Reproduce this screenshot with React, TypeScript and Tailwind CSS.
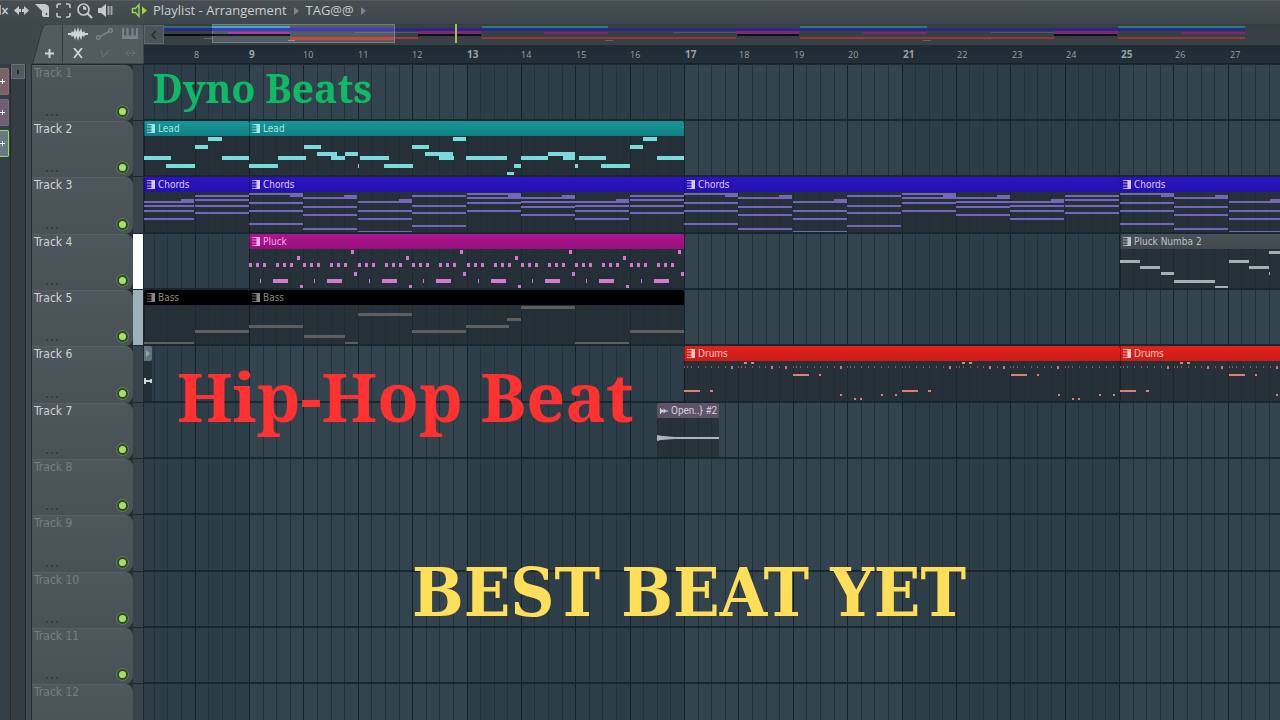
import { ReactNode } from "react";
import clsx from "clsx";

// [x, width, y] in pixels, relative to the clip body
type Note = [number, number, number];

// One four bar section is 218px wide, the 8 bar patterns are 435px
const PATTERN = 435;
const barX = (bar: number) => Math.round((bar * PATTERN) / 8);

const leadNotes: Note[] = [
  [0, 29, 28], [29, 28, 20], [55, 17, 9], [68, 20, 16], [82, 14, 20], [96, 13, 16],
  [109, 1, 28], [111, 29, 20], [135, 29, 28], [163, 17, 9], [176, 28, 16], [190, 15, 20],
  [204, 13, 1], [217, 41, 20], [258, 7, 36], [265, 7, 28], [272, 27, 20], [299, 27, 16],
  [314, 12, 20], [326, 3, 28], [330, 27, 20], [352, 29, 28], [381, 13, 9], [394, 14, 1], [408, 27, 20],
];

const chordRows = [
  [1, 10, 18, 31],
  [5, 14, 22, 36],
  [9, 18, 26, 39],
  [3, 13, 20, 33],
  [1, 5, 10, 18],
  [5, 9, 14, 22],
  [9, 13, 18, 26],
  [3, 7, 13, 20],
];
const chordPickups = [3, 3, 7, null, 3, 3, 7, null];
const chordNotes: Note[] = chordRows.flatMap((rows, bar) => {
  const notes: Note[] = rows.map((y) => [barX(bar), 54, y]);
  const pickup = chordPickups[bar];
  if (pickup !== null) notes.push([barX(bar) + 41, 13, pickup]);
  return notes;
});

const pluckNotes: Note[] = Array.from({ length: 8 }, (_, i) => i).flatMap((bar) => {
  const x = barX(bar);
  const notes: Note[] = [0, 7, 14, 27, 34, 41].map((dx) => [x + dx, 3, 14]);
  notes.push([x + 11, 1, 30], [x + 24, 15, 30]);
  if (bar % 2) notes.push([x + 48, 3, 1], [x + 51, 3, 23]);
  else notes.push([x + 48, 3, 7], [x + 51, 3, 36]);
  return notes;
});

const bassNotes: Note[] = [
  [0, 54, 20], [55, 41, 30], [96, 13, 37], [109, 54, 8], [163, 54, 25],
  [217, 43, 20], [258, 14, 13], [272, 54, 1], [326, 54, 37], [381, 54, 25],
];

const drumNotes: Note[] = [0, 218].flatMap((x): Note[] => [
  [x, 16, 29], [x + 26, 3, 29], [x + 109, 16, 13], [x + 135, 2, 13],
  [x + 60, 3, 1], [x + 67, 3, 1],
  [x + 156, 2, 33], [x + 197, 2, 33], [x + 211, 2, 33], [x + 170, 2, 37], [x + 176, 2, 37],
]);

const hats: Note[] = Array.from({ length: 8 }, (_, i) => i).flatMap((bar) => {
  const x = barX(bar);
  const notes: Note[] = [0, 3, 7, 14, 21, 27, 34, 41].map((dx) => [x + dx, 1, 5]);
  notes.push(bar % 4 === 3 ? [x + 48, 1, 5] : [x + 47, 2, 5]);
  if (bar % 4 === 1) notes.push([x + 33, 2, 5]);
  return notes;
});

const numbaNotes: Note[] = [
  [0, 20, 11], [20, 20, 17], [41, 13, 23], [54, 41, 31], [95, 13, 37],
  [109, 20, 11], [129, 20, 17], [149, 13, 2], [149, 1, 23],
];

interface ClipData {
  name: string;
  x: number;
  width: number;
  offset?: number;
  header: string;
  label: string;
  fill: string;
  notes: Note[];
  thickness: number;
  fine?: Note[];
}

const lead = {
  name: "Lead",
  header: "bg-linear-to-b from-[#18959a] to-[#0f8184]",
  label: "text-[#a3e6e4]",
  fill: "fill-[#79dcdb]",
  notes: leadNotes,
  thickness: 4,
};
const chords = {
  name: "Chords",
  header: "bg-linear-to-b from-[#2c14c4] to-[#2410ae]",
  label: "text-[#d6ccfa]",
  fill: "fill-[#7465bd]",
  notes: chordNotes,
  thickness: 2,
};
const pluck = {
  name: "Pluck",
  header: "bg-linear-to-b from-[#ad1590] to-[#97107c]",
  label: "text-[#f4aee5]",
  fill: "fill-[#d678d2]",
  notes: pluckNotes,
  thickness: 4,
};
const bass = {
  name: "Bass",
  header: "bg-black",
  label: "text-[#8b8785]",
  fill: "fill-[#5f5f60]",
  notes: bassNotes,
  thickness: 3,
};
const drums = {
  name: "Drums",
  header: "bg-linear-to-b from-[#e2211d] to-[#cc1c16]",
  label: "text-[#fdd0cb]",
  fill: "fill-[#df7f7a]",
  notes: drumNotes,
  thickness: 2,
  fine: hats,
};
const numba = {
  name: "Pluck Numba 2",
  header: "bg-linear-to-b from-[#485256] to-[#40494d]",
  label: "text-[#bcc2c4]",
  fill: "fill-[#a5b0b4]",
  notes: numbaNotes,
  thickness: 3,
};

interface Track {
  name: string;
  muted?: boolean;
  gutter?: string;
  clips?: ClipData[];
  audio?: ReactNode;
}

const tracks: Track[] = [
  { name: "Track 1", muted: true },
  {
    name: "Track 2",
    clips: [
      { ...lead, x: 0, width: 105, offset: 330 },
      { ...lead, x: 105, width: 435 },
    ],
  },
  {
    name: "Track 3",
    clips: [
      { ...chords, x: 0, width: 105, offset: 330 },
      { ...chords, x: 105, width: 435 },
      { ...chords, x: 540, width: 436 },
      { ...chords, x: 976, width: 435 },
    ],
  },
  {
    name: "Track 4",
    gutter: "bg-white",
    clips: [
      { ...pluck, x: 105, width: 435 },
      { ...numba, x: 976, width: 435 },
    ],
  },
  {
    name: "Track 5",
    gutter: "bg-[#9eb0ba]",
    clips: [
      { ...bass, x: 0, width: 105, offset: 330 },
      { ...bass, x: 105, width: 435 },
    ],
  },
  {
    name: "Track 6",
    clips: [
      { ...drums, x: 540, width: 436 },
      { ...drums, x: 976, width: 435 },
    ],
    audio: <AudioTail />,
  },
  { name: "Track 7", audio: <OpenHat /> },
  { name: "Track 8", muted: true },
  { name: "Track 9", muted: true },
  { name: "Track 10", muted: true },
  { name: "Track 11", muted: true },
  { name: "Track 12", muted: true },
];

function PatternIcon() {
  return (
    <svg width="8" height="9" viewBox="0 0 8 9" className="shrink-0 fill-current">
      <path d="M0 0h5v1H0zM0 2.500h5v1H0zM0 5.500h5v1H0zM0 8h5v1H0z" opacity=".75" />
      <path d="M3 0h5v9H3V8h1.500V1H3z" />
    </svg>
  );
}

function Clip({ clip }: { clip: ClipData }) {
  const offset = clip.offset ?? 0;
  return (
    <div
      className="absolute inset-y-0 flex flex-col overflow-hidden rounded-t-xs"
      style={{ left: clip.x, width: clip.width }}
    >
      <div
        className={clsx(
          "flex h-[15px] shrink-0 items-center gap-[3px] border-l border-black/30 pl-[2px] text-[10px] leading-none whitespace-nowrap",
          clip.header,
          clip.label,
        )}
      >
        <PatternIcon />
        <span>{clip.name}</span>
      </div>
      <div className="flex-1 border-l border-black/30 bg-[#212a30]/70">
        <svg className="-ml-px block h-full w-full overflow-visible">
          <g transform={`translate(${-offset} 0)`} className={clip.fill}>
            {clip.notes.map(([x, w, y], i) => (
              <rect key={i} x={x} y={y} width={w} height={clip.thickness} />
            ))}
            {clip.fine?.map(([x, w, y], i) => (
              <rect key={`f${i}`} x={x} y={y} width={w} height={w > 1 ? 3 : 2} opacity={w > 1 ? 0.9 : 0.55} />
            ))}
          </g>
        </svg>
      </div>
    </div>
  );
}

function AudioTail() {
  return (
    <div className="absolute inset-y-0 left-0 flex w-2 flex-col">
      <div className="flex h-[15px] items-center rounded-r-xs bg-[#62757b]">
        <svg width="8" height="9" viewBox="0 0 8 9" className="fill-[#93a4a8]">
          <path d="M2 1l4 3.5L2 8z" />
        </svg>
      </div>
      <div className="flex-1 bg-[#212a30]/75">
        <svg width="8" height="38" viewBox="0 0 8 38" className="fill-[#cfd9dc]">
          <path d="M0 17h2v2h4v-1h2v4H6v-1H2v2H0z" />
        </svg>
      </div>
    </div>
  );
}

function OpenHat() {
  return (
    <div className="absolute inset-y-0 left-[513px] flex w-[62px] flex-col">
      <div className="flex h-[15px] items-center gap-[3px] rounded-xs bg-[#5f5368] pl-[3px] font-[Roboto,sans-serif] text-[10px] leading-none whitespace-nowrap text-[#d5cedb]">
        <svg width="8" height="8" viewBox="0 0 8 8" className="shrink-0 fill-current">
          <path d="M0 1h1v1l2.500 1.500V1.500L6 3.500h2v1H6L3.500 6.500v-2L1 6v1H0z" />
        </svg>
        <span>Open..{"}"} #2</span>
      </div>
      <div className="flex-1 bg-[#212a30]/60">
        <svg width="62" height="38" viewBox="0 0 62 38" className="fill-[#aeb2bb]">
          <path d="M0 17l4 .8 14 1.200h44v2H18l-14 1-4 1z" />
        </svg>
      </div>
    </div>
  );
}

function GridLines() {
  return (
    <svg className="absolute inset-0 h-full w-full" aria-hidden="true">
      <defs>
        <pattern id="bars" x="105" width={PATTERN} height="64" patternUnits="userSpaceOnUse">
          <rect width={PATTERN} height="64" className="fill-[#2e3e48]" />
          <rect width="218" height="64" className="fill-[#33444e]" />
          {Array.from({ length: 32 }, (_, i) => (
            <rect
              key={i}
              x={Math.round((i * PATTERN) / 32)}
              width="1"
              height="64"
              className={i % 4 ? "fill-[#22323b]" : "fill-[#12222b]"}
            />
          ))}
        </pattern>
      </defs>
      <rect width="100%" height="100%" fill="url(#bars)" />
    </svg>
  );
}

function ToolButton({ label, children }: { label: string; children: ReactNode }) {
  return (
    <button type="button" aria-label={label} className="flex h-5 w-[21px] items-center justify-center text-[#c3cacd]">
      <svg width="17" height="17" viewBox="0 0 17 17" fill="none" stroke="currentColor">
        {children}
      </svg>
    </button>
  );
}

function Arrow() {
  return (
    <svg width="5" height="8" viewBox="0 0 5 8" className="fill-[#7e888c]">
      <path d="M0 0l5 4-5 4z" />
    </svg>
  );
}

function TitleBar() {
  return (
    <header className="flex h-6 shrink-0 items-center border-t border-[#545c60] bg-linear-to-b from-[#464e53] to-[#3f484d] pb-1">
      <button type="button" aria-label="Delete" className="h-5 w-[11px] text-[#c3cacd]">
        <svg width="9" height="17" viewBox="0 0 9 17" fill="none" stroke="currentColor">
          <path d="M.5 3v10" className="stroke-[#c9a07c]" />
          <path d="M2.500 6l5 6M7.500 6l-5 6" strokeWidth="1.500" />
        </svg>
      </button>
      <ToolButton label="Slip">
        <path d="M1 8.500l5-4.500v3h5V4l5 4.500-5 4.500v-3H6v3z" fill="currentColor" stroke="none" />
        <path d="M8.500 6v5" className="stroke-[#454e53]" />
      </ToolButton>
      <ToolButton label="Slice">
        <path d="M1 2h7v7z" fill="currentColor" stroke="none" />
        <path d="M8 2h3q4 1 4 4v9h-4q-3 0-3-2z" fill="currentColor" stroke="none" />
        <path d="M12.500 11v2" className="stroke-[#454e53]" strokeWidth="1.500" />
      </ToolButton>
      <ToolButton label="Select">
        <path d="M2 6V4q0-2 2-2h2M11 2h2q2 0 2 2v2M15 11v2q0 2-2 2h-2M6 15H4q-2 0-2-2v-2" strokeWidth="1.600" />
      </ToolButton>
      <ToolButton label="Zoom">
        <circle cx="7.500" cy="7.500" r="5.500" strokeWidth="1.700" />
        <path d="M7 4a3.500 3.500 0 013.500 4L7 7.500z" fill="currentColor" stroke="none" />
        <path d="M11.500 11.500L16 16" strokeWidth="2.200" />
      </ToolButton>
      <ToolButton label="Playback">
        <path d="M1 6h3l5-4v13l-5-4H1z" fill="currentColor" stroke="none" />
        <path d="M11.500 4v9M14.500 4v9" strokeWidth="2" opacity=".7" />
      </ToolButton>
      <button type="button" aria-label="Playlist menu" className="ml-[13px] flex w-[21px] justify-center text-[#9fd840]">
        <svg width="17" height="17" viewBox="0 0 17 17" fill="none" stroke="currentColor">
          <path d="M1.500 6.500h3L8 2.500v12l-3.500-4h-3z" strokeWidth="1.400" />
          <path d="M11 4.500l5 4-5 4z" fill="currentColor" stroke="none" />
        </svg>
      </button>
      <nav className="ml-[3px] flex items-center gap-[7px] font-['Open_Sans',sans-serif] text-[13px] leading-none text-[#c8ced0]">
        <button type="button">Playlist - Arrangement</button>
        <Arrow />
        <button type="button">TAG@@</button>
        <Arrow />
      </nav>
    </header>
  );
}

// [x, width, y, height, color] in the overview strip, x counted from the strip's left edge
const overview: [number, number, number, number, string][] = [
  [0, 126, 2, 2, "fill-[#25727b]"], [318, 126, 2, 2, "fill-[#2b7a7c]"], [636, 127, 2, 2, "fill-[#2b7a7c]"], [954, 127, 2, 2, "fill-[#2b7a7c]"],
  [0, 1081, 4, 3, "fill-[#2b2789]"],
  [64, 62, 8, 2, "fill-[#a02c8a]"], [254, 63, 7, 3, "fill-[#7b2a70]"], [380, 64, 8, 2, "fill-[#7b2a70]"],
  [572, 63, 7, 3, "fill-[#7b2a70]"], [699, 64, 8, 2, "fill-[#7b2a70]"], [890, 64, 7, 3, "fill-[#7b2a70]"], [1017, 64, 8, 2, "fill-[#7b2a70]"],
  [191, 63, 8, 1, "fill-[#4f5a6a]"], [509, 63, 8, 1, "fill-[#4f5a6a]"], [827, 63, 8, 1, "fill-[#4f5a6a]"],
  [0, 126, 10, 2, "fill-[#0a0d10]"], [254, 63, 10, 2, "fill-[#0f0d14]"], [573, 62, 10, 2, "fill-[#0f0d14]"], [890, 63, 10, 2, "fill-[#0f0d14]"],
  [126, 128, 13, 2, "fill-[#a33a38]"], [318, 254, 13, 2, "fill-[#963836]"], [636, 254, 13, 2, "fill-[#963836]"], [954, 127, 13, 2, "fill-[#963836]"],
  [40, 9, 14, 1, "fill-[#626b70]"], [124, 7, 16, 1, "fill-[#8a8790]"], [441, 8, 16, 1, "fill-[#69656f]"], [759, 8, 16, 1, "fill-[#69656f]"],
];

function Overview() {
  return (
    <div className="flex h-[21px] border-t border-[#343d42] bg-[#384045]">
      <button type="button" aria-label="Scroll left" className="flex h-[19px] w-5 shrink-0 items-center justify-center border border-[#5d676b] bg-[#4b5559]">
        <svg width="6" height="10" viewBox="0 0 6 10" fill="none" className="stroke-[#22292d]" strokeWidth="1.500">
          <path d="M5 1L1 5l4 4" />
        </svg>
      </button>
      <svg className="h-full flex-1 overflow-visible">
        {overview.map(([x, w, y, h, fill], i) => (
          <rect key={i} x={x} y={y - 1} width={w} height={h} className={fill} />
        ))}
        <rect x="48.500" y="-.5" width="182" height="18" className="fill-[#bfd0d5]/20 stroke-[#8b979b]/70" />
        <rect x="64" y="7" width="62" height="2" className="fill-[#b13aa3]" />
        <rect x="48" y="9" width="78" height="2" className="fill-[#14171a]" />
        <rect x="48" y="1" width="78" height="2" className="fill-[#35b2bb]" />
        <rect x="48" y="3" width="182" height="3" className="fill-[#4438c0]" />
        <rect x="126" y="12" width="104" height="3" className="fill-[#c8473f]" />
        <rect x="291" y="-1" width="2" height="19" className="fill-[#9bc35a]" />
      </svg>
    </div>
  );
}

function Ruler() {
  return (
    <div className="h-[19px] overflow-hidden border-b border-[#14222a] bg-linear-to-b from-[#1f2b33] to-[#22303a]">
      <ol className="-ml-[5px] flex h-full items-center font-['Open_Sans',sans-serif]">
        {Array.from({ length: 21 }, (_, i) => i + 7).map((bar) => (
          <li
            key={bar}
            className={clsx(
              "shrink-0 pl-px leading-none text-[#98a2a6]",
              bar === 27 ? "w-6" : bar % 2 ? "w-[54px]" : "w-[55px]",
              bar % 4 === 1 ? "text-[10px] font-bold" : "text-[9px]",
            )}
          >
            {bar === 7 ? "" : bar}
          </li>
        ))}
      </ol>
    </div>
  );
}

function CornerTools() {
  return (
    <div className="relative h-10 w-28 shrink-0 text-[#cdd4d6]">
      <svg className="absolute inset-0 h-full w-full" viewBox="0 0 112 40" aria-hidden="true">
        <path d="M.5 40L10 5q2-5 7-5h95v40z" className="fill-[#515b60] stroke-[#2b3439]" />
        <path d="M30.500 0v40" className="stroke-[#343e43]" />
      </svg>
      <div className="relative grid h-full grid-cols-[30px_1fr_1fr_1fr] grid-rows-2 place-items-center pb-px">
        <button type="button" aria-label="Add track" className="col-start-1 row-start-2 ml-1">
          <svg width="9" height="9" viewBox="0 0 9 9" className="stroke-current" strokeWidth="2">
            <path d="M4.500 0v9M0 4.500h9" />
          </svg>
        </button>
        <button type="button" aria-label="Audio clips" className="col-start-2 row-start-1 ml-1">
          <svg width="20" height="14" viewBox="0 0 20 14" className="fill-current">
            <path d="M0 6h3l1-2 1.500 1.500L7 1l1.500 4L10 0l1.500 5L13 1l1.500 4.500L16 4l1 2h3v2h-3l-1 2-1.500-1.500L13 13l-1.500-4L10 14 8.500 9 7 13 5.500 8.500 4 10 3 8H0z" />
          </svg>
        </button>
        <button type="button" aria-label="Automation clips" className="col-start-3 row-start-1 ml-1 text-[#788287]">
          <svg width="17" height="12" viewBox="0 0 17 12" fill="none" stroke="currentColor" strokeWidth="1.500">
            <circle cx="2.500" cy="9.500" r="1.800" />
            <circle cx="14.500" cy="2.500" r="1.800" />
            <path d="M4 8.500L13 3.500" />
          </svg>
        </button>
        <button type="button" aria-label="Patterns" className="col-start-4 row-start-1 text-[#788287]">
          <svg width="16" height="11" viewBox="0 0 16 11" fill="none" stroke="currentColor" strokeWidth="2">
            <path d="M1 0v10h14V0M5.500 0v9M10.500 0v9" />
            <path d="M0 9h16" strokeWidth="3" />
          </svg>
        </button>
        <button type="button" aria-label="Clear" className="col-start-2 row-start-2 ml-1">
          <svg width="10" height="10" viewBox="0 0 10 10" fill="none" stroke="currentColor" strokeWidth="1.800">
            <path d="M1 0l8 10M9 0L1 10" />
          </svg>
        </button>
        <button type="button" aria-label="Fade" className="col-start-3 row-start-2 ml-1 text-[#697479]">
          <svg width="10" height="9" viewBox="0 0 10 9" fill="none" stroke="currentColor">
            <path d="M1 1l2 7L9 1M5 5h3" />
          </svg>
        </button>
        <button type="button" aria-label="Stretch" className="col-start-4 row-start-2 text-[#697479]">
          <svg width="11" height="8" viewBox="0 0 11 8" fill="none" stroke="currentColor">
            <path d="M1 4h9M4 1L1 4l3 3M7 1l3 3-3 3" />
          </svg>
        </button>
      </div>
    </div>
  );
}

function TrackRow({ track, tall }: { track: Track; tall: boolean }) {
  return (
    <li className={clsx("flex shrink-0", tall ? "h-[57px]" : "h-14")}>
      <div className="w-[101px] shrink-0 bg-[#232d33]">
        <div className="flex h-full flex-col justify-between rounded-r-lg border-t border-[#576065] bg-linear-to-b from-[#4e575c] to-[#485156]">
          <span className={clsx("pl-[2px] text-[12px] leading-[14px]", track.muted ? "text-[#757f84]" : "text-[#ced4d6]")}>
            {track.name}
          </span>
          <div className="flex items-end justify-between pr-[5px] pb-1 pl-[14px]">
            <span className="flex gap-[3px] pb-px" aria-hidden="true">
              <i className="size-[2px] bg-[#333c41]" />
              <i className="size-[2px] bg-[#333c41]" />
              <i className="size-[2px] bg-[#333c41]" />
            </span>
            <input
              type="checkbox"
              defaultChecked
              aria-label={`${track.name} on`}
              className="size-[11px] appearance-none rounded-full border-2 border-[#33452c] bg-[#a3e362] outline outline-[#5f8048]"
            />
          </div>
        </div>
      </div>
      <div className="w-[11px] shrink-0 border-r border-b border-[#1b262c] bg-[#36434b]">
        {track.gutter && <div className={clsx("h-full", track.gutter)} />}
      </div>
      <div className="relative min-w-0 flex-1 overflow-hidden border-b-2 border-[#14232b]/85">
        {track.clips?.map((clip) => (
          <Clip key={clip.x} clip={clip} />
        ))}
        {track.audio}
      </div>
    </li>
  );
}

function PickerChip({ className }: { className: string }) {
  return (
    <button type="button" aria-label="Add clip" className={clsx("flex h-[27px] w-[9px] items-center rounded-r-xs border-y border-r text-white", className)}>
      <svg width="5" height="5" viewBox="0 0 5 5" stroke="currentColor">
        <path d="M2.500 0v5M0 2.500h5" />
      </svg>
    </button>
  );
}

function Picker() {
  return (
    <aside className="flex w-8 shrink-0 bg-[#3c464b] pt-10">
      <div className="flex w-[11px] flex-col gap-1 border-r border-[#202a30] bg-[#333e46] pt-1">
        <PickerChip className="border-[#856c6c] bg-[#7a6264]" />
        <PickerChip className="border-[#776a7f] bg-[#6d5f75]" />
        <PickerChip className="border-[#a5dc4a] bg-[#647a7e]" />
      </div>
      <div className="w-[15px] border-r border-[#20282d] bg-[#353d43]">
        <div className="flex h-[15px] items-center justify-center border border-[#697276] bg-[#50595d]">
          <i className="h-1 w-[2px] bg-[#22292d]" />
        </div>
      </div>
      <div className="flex-1 border-r border-[#232c31] bg-[#424b51]" />
    </aside>
  );
}

export default function App() {
  return (
    <div className="relative flex h-screen flex-col overflow-hidden bg-[#3f484d] font-['DejaVu_Sans_Condensed','DejaVu_Sans',sans-serif]">
      <TitleBar />
      <div className="flex min-h-0 flex-1">
        <Picker />
        <main className="flex min-w-0 flex-1 flex-col">
          <div className="flex shrink-0">
            <CornerTools />
            <div className="min-w-0 flex-1">
              <Overview />
              <Ruler />
            </div>
          </div>
          <div className="relative min-h-0 flex-1 overflow-hidden border-t border-[#20292e]">
            <div className="absolute inset-y-0 right-0 left-28">
              <GridLines />
            </div>
            <ul className="relative flex flex-col">
              {tracks.map((track, i) => (
                <TrackRow key={track.name} track={track} tall={i % 3 === 2} />
              ))}
            </ul>
          </div>
        </main>
      </div>

      {/* Captions over the playlist */}
      <div className="pointer-events-none absolute inset-0 font-['Noto_Serif','DejaVu_Serif',serif] leading-none font-bold whitespace-nowrap">
        <p className="absolute top-[68px] left-[153px] text-[39px] text-[#0fba66]">Dyno Beats</p>
        <h1 className="absolute top-[362px] left-[177px] text-[68px] text-[#ff3131]">Hip-Hop Beat</h1>
        <h2 className="absolute top-[558px] left-[412px] font-['DejaVu_Serif_Condensed','DejaVu_Serif',serif] text-[68px] text-[#ffde59]">
          BEST BEAT YET
        </h2>
      </div>
    </div>
  );
}
